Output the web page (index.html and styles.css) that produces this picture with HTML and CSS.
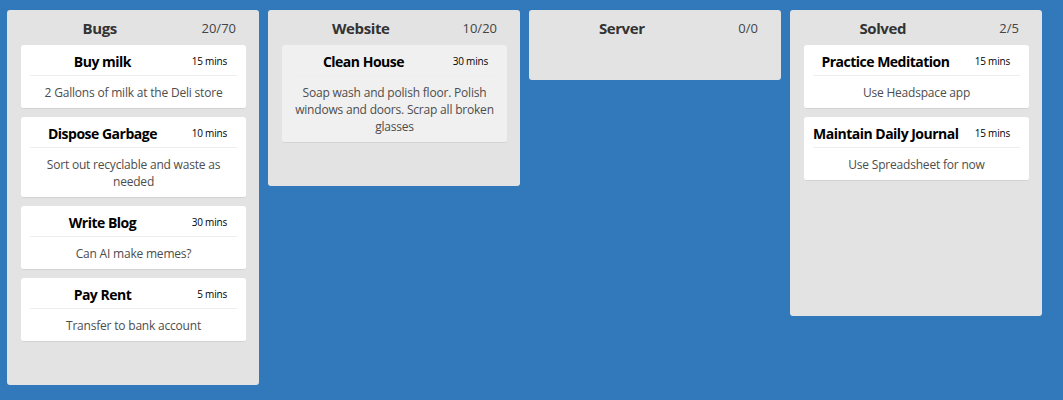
FILE: index.html
```html
<!DOCTYPE html>
<html lang="en">
<head>
<meta charset="utf-8">
<title>Board</title>
<link rel="stylesheet" href="styles.css">
</head>
<body>
<div class="board">
  <section class="lane">
    <header class="lane-header"><span class="lane-title">Bugs</span><span class="lane-label">20/70</span></header>
    <div class="cards">
      <article class="card">
        <div class="card-header"><span class="card-title">Buy milk</span><span class="card-label">15 mins</span></div>
        <p class="card-desc">2 Gallons of milk at the Deli store</p>
      </article>
      <article class="card">
        <div class="card-header"><span class="card-title">Dispose Garbage</span><span class="card-label">10 mins</span></div>
        <p class="card-desc">Sort out recyclable and waste as needed</p>
      </article>
      <article class="card">
        <div class="card-header"><span class="card-title">Write Blog</span><span class="card-label">30 mins</span></div>
        <p class="card-desc">Can AI make memes?</p>
      </article>
      <article class="card">
        <div class="card-header"><span class="card-title">Pay Rent</span><span class="card-label">5 mins</span></div>
        <p class="card-desc">Transfer to bank account</p>
      </article>
    </div>
  </section>
  <section class="lane">
    <header class="lane-header"><span class="lane-title">Website</span><span class="lane-label">10/20</span></header>
    <div class="cards">
      <article class="card card--active">
        <div class="card-header"><span class="card-title">Clean House</span><span class="card-label">30 mins</span></div>
        <p class="card-desc">Soap wash and polish floor. Polish windows and doors. Scrap all broken glasses</p>
      </article>
    </div>
  </section>
  <section class="lane">
    <header class="lane-header"><span class="lane-title">Server</span><span class="lane-label">0/0</span></header>
    <div class="cards"></div>
  </section>
  <section class="lane lane--tall">
    <header class="lane-header"><span class="lane-title">Solved</span><span class="lane-label">2/5</span></header>
    <div class="cards">
      <article class="card">
        <div class="card-header"><span class="card-title">Practice Meditation</span><span class="card-label">15 mins</span></div>
        <p class="card-desc">Use Headspace app</p>
      </article>
      <article class="card">
        <div class="card-header"><span class="card-title">Maintain Daily Journal</span><span class="card-label">15 mins</span></div>
        <p class="card-desc">Use Spreadsheet for now</p>
      </article>
    </div>
  </section>
</div>
</body>
</html>
```

FILE: styles.css
```css
html, body {
  margin: 0;
  height: 100%;
}
body {
  background: #3179ba;
  font-family: "Open Sans", "Noto Sans", "DejaVu Sans", sans-serif;
  overflow: hidden;
}
.board {
  display: flex;
  align-items: flex-start;
  gap: 9px;
  padding: 10px 0 0 7px;
}
.lane {
  box-sizing: border-box;
  width: 252px;
  flex: 0 0 252px;
  background: #e3e3e3;
  border-radius: 3px;
  padding: 0 13px 35px 14px;
}
.lane--tall {
  min-height: 306px;
}
.lane-header {
  display: flex;
  align-items: center;
  height: 35px;
  padding-top: 1px;
  box-sizing: border-box;
}
.lane-title {
  width: 70%;
  text-align: center;
  font-weight: bold;
  font-size: 15px;
  letter-spacing: -0.4px;
  color: #333;
}
.lane-label {
  width: 30%;
  box-sizing: border-box;
  text-align: right;
  padding-right: 10px;
  font-size: 13px;
  color: #444;
}
.card {
  background: #fff;
  border-radius: 3px;
  border-bottom: 1px solid #d2d2d2;
  padding: 0 9px;
  margin-bottom: 8px;
  box-sizing: border-box;
}
.card--active {
  background: #f0f0f0;
}
.card-header {
  display: flex;
  align-items: center;
  padding: 8px 0 4px;
  border-bottom: 1px solid #eee;
}
.card-title {
  width: 70%;
  text-align: center;
  font-weight: bold;
  font-size: 14px;
  line-height: 18px;
  letter-spacing: -0.5px;
  white-space: nowrap;
  color: #000;
}
.card-label {
  width: 30%;
  box-sizing: border-box;
  text-align: right;
  padding-right: 10px;
  font-size: 10px;
  letter-spacing: -0.2px;
  white-space: nowrap;
  color: #000;
  margin-top: -2px;
}
.card-desc {
  margin: 0;
  padding: 8px 0 7px;
  font-size: 12px;
  line-height: 17px;
  letter-spacing: -0.2px;
  text-align: center;
  color: #4d4d4d;
}
```
